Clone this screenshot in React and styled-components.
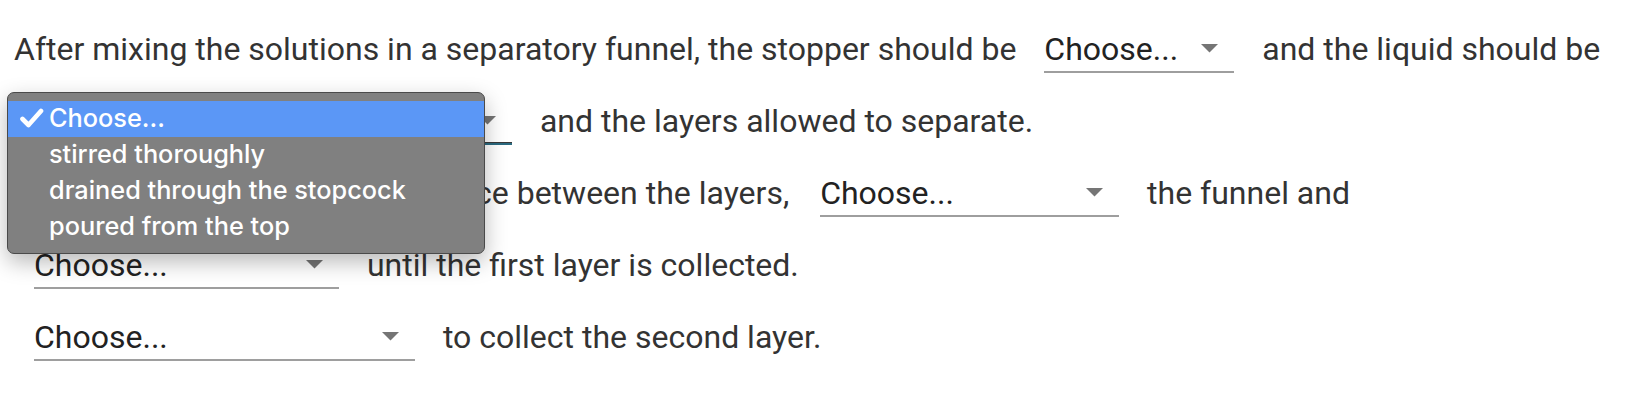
import React from 'react';
import styled, { createGlobalStyle } from 'styled-components';

const GlobalStyle = createGlobalStyle`
  body {
    margin: 0;
    background: #fff;
  }
`;

const Page = styled.div`
  position: relative;
  padding: 13px 14px 0 14px;
  font-family: Roboto, "Liberation Sans", sans-serif;
  font-size: 32px;
  line-height: 72px;
  color: #333;
`;

const Sentence = styled.div``;

const SelectBox = styled.span`
  display: inline-flex;
  align-items: center;
  justify-content: space-between;
  width: ${(p) => p.$width}px;
  margin: 0 20px 0 ${(p) => p.$lead || 20}px;
  padding: 0 16px 3px 0;
  box-sizing: border-box;
  line-height: 1.2;
  color: #222;
  border-bottom: 2px solid ${(p) => (p.$focused ? '#2b6a80' : '#9e9e9e')};
  box-shadow: ${(p) => (p.$focused ? 'inset 0 -1px 0 #3a3a3a' : 'none')};
`;

const Arrow = styled.svg`
  width: 17px;
  height: 8.5px;
  margin-bottom: 1px;
  fill: #757575;
  flex: none;
`;

const Menu = styled.ul`
  position: absolute;
  left: 7px;
  top: 92px;
  width: 478px;
  margin: 0;
  padding: 8px 0;
  box-sizing: border-box;
  list-style: none;
  background: #808080;
  border: 1px solid #4a4a4a;
  border-radius: 7px;
  box-shadow: 0 8px 22px rgba(0, 0, 0, 0.28);
  font-family: Inter, "Noto Sans", sans-serif;
  font-weight: 550;
  font-size: 25.3px;
  line-height: 36px;
  color: #fff;
`;

const MenuItem = styled.li`
  display: flex;
  align-items: center;
  height: 36px;
  padding-left: 41px;
  position: relative;
  background: ${(p) => (p.$active ? '#5b97f6' : 'transparent')};
  span {
    position: relative;
    top: -1px;
  }
`;

const Check = styled.svg`
  position: absolute;
  left: 11px;
  top: 7px;
  width: 25px;
  height: 20px;
  fill: none;
  stroke: #fff;
  stroke-width: 4.6;
  stroke-linecap: round;
  stroke-linejoin: round;
`;

const Select = ({ width, focused, lead }) => (
  <SelectBox $width={width} $focused={focused} $lead={lead}>
    <span>Choose...</span>
    <Arrow viewBox="0 0 10 5">
      <path d="M0 0l5 5 5-5z" />
    </Arrow>
  </SelectBox>
);

const options = ['Choose...', 'stirred thoroughly', 'drained through the stopcock', 'poured from the top'];

export default function App() {
  return (
    <>
      <GlobalStyle />
      <Page>
        <Sentence>
          After mixing the solutions in a separatory funnel, the stopper should be{' '}
          <Select width={190} /> and the liquid should be <Select width={478} focused /> and the
          layers allowed to separate.
        </Sentence>
        <Sentence>
          When you can see a clear interface between the layers, <Select width={299} lead={23} />{' '}
          the funnel and <Select width={305} /> until the first layer is collected.
        </Sentence>
        <Sentence>
          <Select width={381} /> to collect the second layer.
        </Sentence>
        <Menu>
          {options.map((o, i) => (
            <MenuItem key={o} $active={i === 0}>
              {i === 0 && (
                <Check viewBox="0 0 25 20">
                  <path d="M3.5 11 L9.5 17 L22 3" />
                </Check>
              )}
              <span>{o}</span>
            </MenuItem>
          ))}
        </Menu>
      </Page>
    </>
  );
}
